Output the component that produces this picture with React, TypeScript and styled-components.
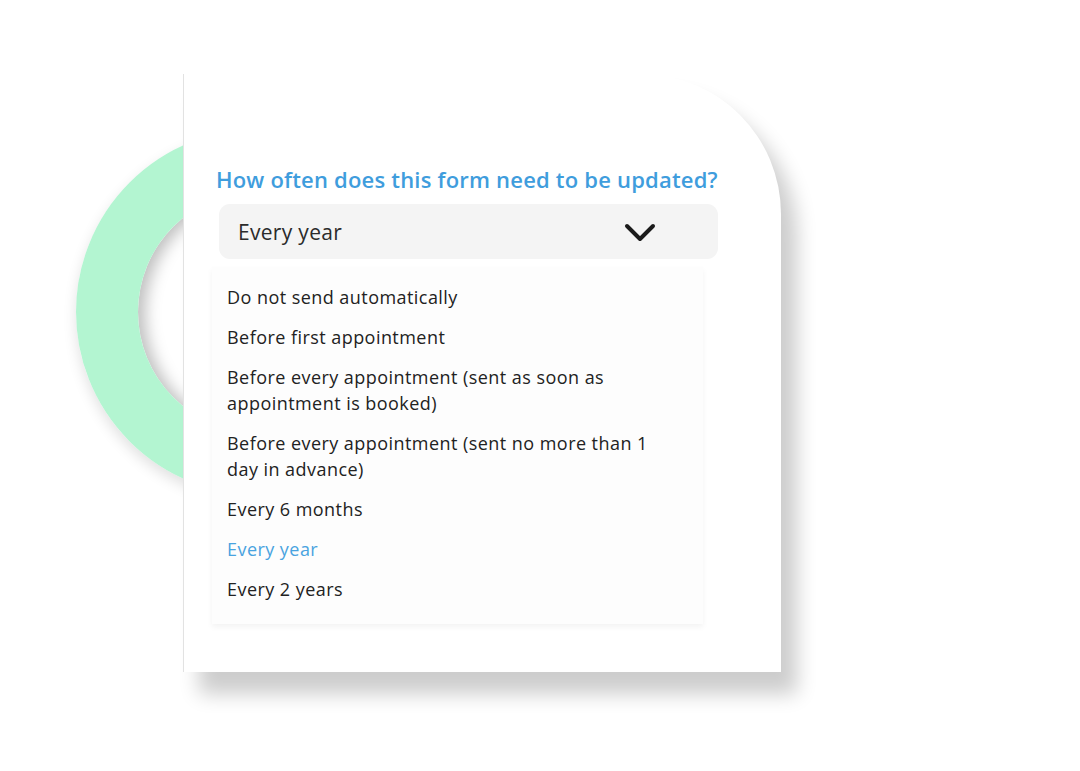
import styled, { createGlobalStyle } from "styled-components"

const GlobalStyle = createGlobalStyle`
  html, body {
    margin: 0;
    padding: 0;
    background: #ffffff;
    font-family: "Open Sans", "Noto Sans", sans-serif;
  }
`

const Stage = styled.div`
  position: relative;
  width: 1080px;
  height: 771px;
  padding: 74px 0 0 183px;
  box-sizing: border-box;
  overflow: hidden;
`

// decorative ring sitting behind the card
const Ring = styled.div`
  position: absolute;
  left: 76px;
  top: 129px;
  width: 366px;
  height: 366px;
  box-sizing: border-box;
  border-radius: 50%;
  border: 62px solid #b3f5d1;
  box-shadow: 0 6px 14px rgba(0, 0, 0, 0.12),
    inset 7px 2px 16px rgba(0, 0, 0, 0.26);
`

const Card = styled.div`
  position: relative;
  z-index: 1;
  width: 598px;
  height: 598px;
  box-sizing: border-box;
  background: #ffffff;
  border-left: 1px solid #e2e2e2;
  border-top-right-radius: 140px;
  box-shadow: 16px 22px 20px rgba(0, 0, 0, 0.2);
  padding: 90px 0 0 32px;
  display: flex;
  flex-direction: column;
`

const Question = styled.h2`
  margin: 0;
  font-size: 22px;
  line-height: 30px;
  font-weight: 600;
  color: #3f9ddd;
  letter-spacing: 0.2px;
`

const SelectBox = styled.div`
  margin: 10px 0 0 3px;
  width: 499px;
  height: 55px;
  box-sizing: border-box;
  padding: 3px 62px 0 19px;
  border-radius: 11px;
  background: #f4f4f4;
  display: flex;
  align-items: center;
  justify-content: space-between;
`

const SelectValue = styled.span`
  font-size: 21px;
  letter-spacing: 0.3px;
  color: #2b2b2b;
  margin-top: -3px;
`

const Options = styled.ul`
  list-style: none;
  margin: 8px 0 0 -4px;
  padding: 10px 0 15px 15px;
  width: 491px;
  box-sizing: border-box;
  background: #fdfdfd;
  box-shadow: 0 3px 6px rgba(0, 0, 0, 0.05);
`

const Option = styled.li<{ selected?: boolean }>`
  max-width: 440px;
  padding: 7px 0;
  font-size: 18px;
  line-height: 26px;
  letter-spacing: 0.45px;
  color: ${(p) => (p.selected ? "#49a3e0" : "#222222")};
`

const options = [
  "Do not send automatically",
  "Before first appointment",
  "Before every appointment (sent as soon as appointment is booked)",
  "Before every appointment (sent no more than 1 day in advance)",
  "Every 6 months",
  "Every year",
  "Every 2 years",
]

function Chevron() {
  return (
    <svg width="32" height="20" viewBox="0 0 32 20">
      <path
        d="M3 3 L16 16 L29 3"
        fill="none"
        stroke="#1b1b1b"
        strokeWidth="4"
        strokeLinecap="round"
        strokeLinejoin="round"
      />
    </svg>
  )
}

export default function App() {
  const value = "Every year"
  return (
    <>
      <GlobalStyle />
      <Stage>
        <Ring />
        <Card>
          <Question>How often does this form need to be updated?</Question>
          <SelectBox>
            <SelectValue>{value}</SelectValue>
            <Chevron />
          </SelectBox>
          <Options>
            {options.map((o) => (
              <Option key={o} selected={o === value}>
                {o}
              </Option>
            ))}
          </Options>
        </Card>
      </Stage>
    </>
  )
}
